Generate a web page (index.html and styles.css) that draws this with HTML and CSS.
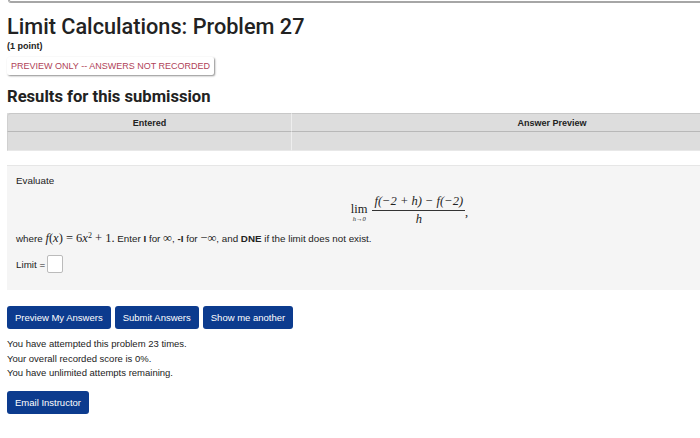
FILE: index.html
```html
<!DOCTYPE html>
<html>
<head>
<meta charset="utf-8">
<link rel="stylesheet" href="styles.css">
</head>
<body>
<div class="topbar"></div>
<div class="page">
  <h1 class="title">Limit Calculations: Problem 27</h1>
  <div class="points">(1 point)</div>
  <div class="badge">PREVIEW ONLY -- ANSWERS NOT RECORDED</div>
  <h2 class="results">Results for this submission</h2>
  <table class="attempt">
    <tr><th class="c1">Entered</th><th class="c2">Answer Preview</th></tr>
    <tr><td class="c1"></td><td class="c2"></td></tr>
  </table>
  <div class="problem">
    <div class="evaluate">Evaluate</div>
    <div class="display">
      <span class="lim"><span class="limword">lim</span><span class="limsub">h→0</span></span>
      <span class="frac"><span class="num">f(−2 + h) − f(−2)</span><span class="den">h</span></span><span class="comma">,</span>
    </div>
    <div class="where">where <span class="m">f</span><span class="mr">(</span><span class="m">x</span><span class="mr">) = 6</span><span class="m">x</span><sup class="mr">2</sup><span class="mr"> + 1.</span> Enter <b>I</b> for <span class="mr">∞</span>, <b>-I</b> for <span class="mr">−∞</span>, and <b>DNE</b> if the limit does not exist.</div>
    <div class="answer">Limit = <span class="inp"></span></div>
  </div>
  <div class="buttons">
    <span class="btn">Preview My Answers</span>
    <span class="btn">Submit Answers</span>
    <span class="btn">Show me another</span>
  </div>
  <div class="info">
    <div>You have attempted this problem 23 times.</div>
    <div>Your overall recorded score is 0%.</div>
    <div>You have unlimited attempts remaining.</div>
  </div>
  <span class="btn email">Email Instructor</span>
</div>
</body>
</html>
```
FILE: styles.css
```css
html, body { margin: 0; padding: 0; }
body {
  width: 700px; height: 438px; overflow: hidden;
  font-family: "Liberation Sans", Arial, sans-serif;
  color: #222; background: #fff;
}
.topbar {
  margin-left: 8px; width: 760px; height: 1px;
  border-left: 2px solid #aaa; border-bottom: 2px solid #a6a6a6;
  border-bottom-left-radius: 4px;
}
.page { padding: 0 0 0 7px; width: 805px; }
.title { font-family: Roboto, "Liberation Sans", sans-serif; font-size: 21.7px; font-weight: 500; margin: 10px 0 0 0; line-height: 28px; color: #222; }
.points { font-size: 9px; font-weight: bold; margin-top: -1px; line-height: 12px; }
.badge {
  display: inline-block; margin-top: 5px; padding: 3px 4px;
  font-size: 9px; color: #b04358; line-height: 12px;
  box-shadow: 1px 1px 2px rgba(0,0,0,0.45); border-radius: 2px;
}
.results { font-family: Roboto, "Liberation Sans", sans-serif; font-size: 16.6px; font-weight: 700; margin: 12px 0 0 0; line-height: 20px; color: #222; }
.attempt {
  margin-top: 6px; width: 805px; border-collapse: separate; border-spacing: 0;
  background: #ddd; font-size: 9px;
}
.attempt th { height: 17px; font-weight: bold; text-align: center; border-top: 1px solid #c8c8c8; border-bottom: 1px solid #b8b8b8; padding: 0; }
.attempt td { height: 18px; padding: 0; border-bottom: 1px solid #e8e8e8; }
.attempt .c1 { width: 283px; border-left: 1px solid #d0d0d0; border-right: 1px solid #eee; }
.attempt th.c1 { border-top-left-radius: 4px; }
.problem {
  margin-top: 14px; background: #f5f5f5; border-top: 1px solid #e6e6e6;
  height: 125px; font-size: 9.8px; padding: 0 9px; box-sizing: border-box;
  width: 805px;
}
.evaluate { padding-top: 9px; line-height: 12px; }
.display { margin-top: 6px; height: 34px; font-family: "Liberation Serif", "DejaVu Serif", serif; font-size: 12.5px; display: flex; justify-content: center; align-items: center; }
.lim { display: inline-flex; flex-direction: column; align-items: center; margin-right: 5px; padding-top: 5px; }
.limword { line-height: 12px; }
.limsub { font-size: 6.5px; font-style: italic; line-height: 7px; }
.frac { display: inline-flex; flex-direction: column; align-items: center; font-style: italic; }
.num { padding: 0 2px 2px; border-bottom: 1px solid #333; line-height: 13px; }
.den { line-height: 13px; padding-top: 2px; }
.comma { align-self: center; padding-top: 5px; }
.where { margin-top: 3px; line-height: 12px; }
.m { font-family: "Liberation Serif", serif; font-style: italic; font-size: 12.5px; }
.mr { font-family: "Liberation Serif", serif; font-size: 12.5px; }
sup.mr { font-size: 8px; }
.answer { margin-top: 10px; display: flex; align-items: center; gap: 2px; }
.inp { display: inline-block; width: 14px; height: 16px; background: #fff; border: 1px solid #bbb; border-radius: 2px; }
.buttons { margin-top: 16px; display: flex; gap: 4px; }
.btn {
  display: inline-block; background: #0c3b8e; color: #fff; font-size: 9.5px;
  padding: 0 8px; height: 23px; line-height: 23px; border-radius: 3px; font-weight: 500;
}
.info { margin-top: 8px; font-size: 9.5px; line-height: 14.5px; }
.email { margin-top: 10px; }
```
